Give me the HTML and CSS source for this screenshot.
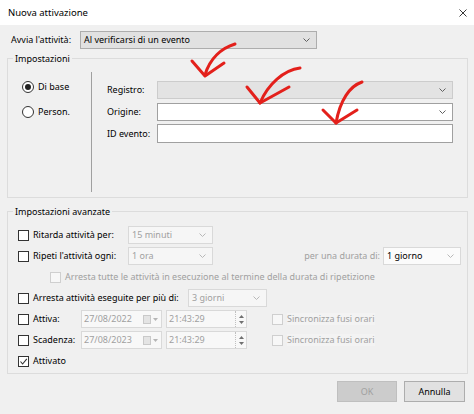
FILE: index.html
```html
<!DOCTYPE html>
<html lang="it">
<head>
<meta charset="utf-8">
<title>Nuova attivazione</title>
<link rel="stylesheet" href="styles.css">
</head>
<body>
<div class="window">
  <div class="titlebar">
    <span class="title">Nuova attivazione</span>
    <svg class="close" viewBox="0 0 8 8" width="8" height="8"><path d="M0.5 0.5 L7.5 7.5 M7.5 0.5 L0.5 7.5" stroke="#222" stroke-width="0.9" fill="none"/></svg>
  </div>
  <div class="main">
    <div class="start-row">
      <span class="start-label">Avvia l'attività:</span>
      <div class="combo combo-start"><span>Al verificarsi di un evento</span><svg class="chev" viewBox="0 0 7 4"><path d="M0.5 0.5 L3.5 3.5 L6.5 0.5"/></svg></div>
    </div>

    <fieldset class="group group-basic">
      <legend>Impostazioni</legend>
      <div class="basic-layout">
        <div class="radios">
          <div class="radio-row"><span class="radio checked"></span><span>Di base</span></div>
          <div class="radio-row"><span class="radio"></span><span>Person.</span></div>
        </div>
        <div class="vdivider"></div>
        <div class="fields">
          <span>Registro:</span>
          <div class="combo combo-locked"><span></span><svg class="chev" viewBox="0 0 7 4"><path d="M0.5 0.5 L3.5 3.5 L6.5 0.5"/></svg></div>
          <span>Origine:</span>
          <div class="combo combo-white"><span></span><svg class="chev" viewBox="0 0 7 4"><path d="M0.5 0.5 L3.5 3.5 L6.5 0.5"/></svg></div>
          <span>ID evento:</span>
          <div class="textbox"></div>
        </div>
      </div>
    </fieldset>

    <fieldset class="group group-adv">
      <legend>Impostazioni avanzate</legend>
      <div class="adv-rows">
        <div class="row">
          <label class="chk-wrap w-110"><span class="chk"></span>Ritarda attività per:</label>
          <div class="combo combo-dis w-85"><span>15 minuti</span><svg class="chev" viewBox="0 0 7 4"><path d="M0.5 0.5 L3.5 3.5 L6.5 0.5"/></svg></div>
        </div>
        <div class="row">
          <label class="chk-wrap w-110"><span class="chk"></span>Ripeti l'attività ogni:</label>
          <div class="combo combo-dis w-85"><span>1 ora</span><svg class="chev" viewBox="0 0 7 4"><path d="M0.5 0.5 L3.5 3.5 L6.5 0.5"/></svg></div>
          <span class="spacer"></span>
          <span class="muted duration-label">per una durata di:</span>
          <div class="combo combo-dis combo-dark w-78"><span>1 giorno</span><svg class="chev" viewBox="0 0 7 4"><path d="M0.5 0.5 L3.5 3.5 L6.5 0.5"/></svg></div>
        </div>
        <div class="row indent">
          <span class="chk chk-dis"></span><span class="muted">Arresta tutte le attività in esecuzione al termine della durata di ripetizione</span>
        </div>
        <div class="row">
          <label class="chk-wrap w-170"><span class="chk"></span>Arresta attività eseguite per più di:</label>
          <div class="combo combo-dis w-79"><span>3 giorni</span><svg class="chev" viewBox="0 0 7 4"><path d="M0.5 0.5 L3.5 3.5 L6.5 0.5"/></svg></div>
        </div>
        <div class="row">
          <label class="chk-wrap w-63"><span class="chk"></span>Attiva:</label>
          <div class="datebox"><span>27/08/2022</span><span class="cal"></span><svg class="tri" viewBox="0 0 5 3"><path d="M0 0 H5 L2.5 3 Z"/></svg></div>
          <div class="timebox"><span>21:43:29</span><span class="spin"><svg viewBox="0 0 5 3"><path d="M0 3 H5 L2.5 0 Z"/></svg><svg viewBox="0 0 5 3"><path d="M0 0 H5 L2.5 3 Z"/></svg></span></div>
          <span class="chk chk-dis sync-chk"></span><span class="muted sync-text">Sincronizza fusi orari</span>
        </div>
        <div class="row">
          <label class="chk-wrap w-63"><span class="chk"></span>Scadenza:</label>
          <div class="datebox"><span>27/08/2023</span><span class="cal"></span><svg class="tri" viewBox="0 0 5 3"><path d="M0 0 H5 L2.5 3 Z"/></svg></div>
          <div class="timebox"><span>21:43:29</span><span class="spin"><svg viewBox="0 0 5 3"><path d="M0 3 H5 L2.5 0 Z"/></svg><svg viewBox="0 0 5 3"><path d="M0 0 H5 L2.5 3 Z"/></svg></span></div>
          <span class="chk chk-dis sync-chk"></span><span class="muted sync-text">Sincronizza fusi orari</span>
        </div>
        <div class="row">
          <label class="chk-wrap"><span class="chk"><svg viewBox="0 0 9 9"><path d="M1.5 4.5 L3.6 7 L7.8 1.8"/></svg></span>Attivato</label>
        </div>
      </div>
    </fieldset>

    <div class="buttons">
      <div class="btn btn-ok">OK</div>
      <div class="btn btn-cancel">Annulla</div>
    </div>
  </div>

  <svg class="annotations" viewBox="0 0 474 414" width="474" height="414">
    <g fill="none" stroke="#e3201b" stroke-width="3" stroke-linecap="round" stroke-linejoin="round">
      <path d="M235 44 C222 48 210 58 205 75"/>
      <path d="M192 61 L205 76 L224 63"/>
      <path d="M300 68 C284 70 268 84 260 103"/>
      <path d="M247 87 L260 103 L289 87"/>
      <path d="M362 82 C350 86 340 100 336 123"/>
      <path d="M323 110 L336 123 L357 110"/>
    </g>
  </svg>
</div>
</body>
</html>
```

FILE: styles.css
```css
* { box-sizing: border-box; }
html, body { margin: 0; padding: 0; }
body {
  width: 474px;
  height: 414px;
  overflow: hidden;
  background: #f0f0f0;
  font-family: "Noto Sans", "DejaVu Sans", sans-serif;
  font-size: 9px;
  line-height: 12px;
  color: #000;
}
.window { position: relative; width: 474px; height: 414px; }

.titlebar {
  height: 25px;
  background: #fff;
  display: flex;
  align-items: center;
  justify-content: space-between;
  padding: 0 7px 0 8px;
}
.title { font-size: 9.5px; }
.close { width: 8px; height: 8px; }

.main { padding: 6px 6px 0 7px; }

.start-row { display: flex; align-items: center; height: 18px; }
.start-label { width: 73px; padding-left: 4px; }

.combo {
  display: flex;
  align-items: center;
  justify-content: space-between;
  height: 18px;
  padding: 0 6px 0 3px;
  border: 1px solid #adadad;
  background: #e1e1e1;
  white-space: nowrap;
}
.combo-start { width: 237px; }
.chev { width: 7px; height: 4px; flex: none; fill: none; stroke: #606060; stroke-width: 1; }

.group { margin: 0; padding: 0; border: 1px solid #dcdcdc; min-width: 0; }
.group legend { margin-left: 5px; padding: 0 2px; line-height: 15px; }

.group-basic { margin-top: 2px; }
.basic-layout { display: flex; padding: 6px 0 5px; }
.radios { width: 83px; padding: 8px 0 0 14px; display: flex; flex-direction: column; gap: 11px; }
.radio-row { display: flex; align-items: center; gap: 4px; height: 14px; }
.radio {
  width: 12px; height: 12px;
  border: 1px solid #333;
  border-radius: 50%;
  background: #fff;
  display: flex; align-items: center; justify-content: center;
}
.radio.checked::after { content: ""; width: 6px; height: 6px; border-radius: 50%; background: #222; }
.vdivider { width: 1px; height: 120px; background: #a0a0a0; }

.fields {
  display: grid;
  grid-template-columns: 50px 296px;
  grid-auto-rows: 19px;
  row-gap: 3px;
  padding: 8px 0 0 15px;
  align-items: center;
  align-content: start;
}
.combo-locked { background: #e3e3e3; border-color: #cccccc; }
.combo-white { background: #fff; border-color: #a0a0a0; }
.textbox { height: 19px; background: #fff; border: 1px solid #a0a0a0; }

.group-adv { margin-top: 6px; }
.adv-rows { display: flex; flex-direction: column; gap: 3px; padding: 7px 6px 3px 10px; }
.row { display: flex; align-items: center; height: 18px; }
.row.indent { padding-left: 32px; }

.chk-wrap { display: flex; align-items: center; white-space: nowrap; flex: none; }
.w-110 { width: 110px; }
.w-170 { width: 170px; }
.w-63 { width: 63px; }
.w-85 { width: 85px; }
.w-78 { width: 78px; }
.w-79 { width: 79px; }

.chk {
  width: 11px; height: 11px;
  border: 1px solid #333;
  background: #fff;
  flex: none;
  margin-right: 4px;
  display: flex; align-items: center; justify-content: center;
}
.chk svg { width: 9px; height: 9px; fill: none; stroke: #333; stroke-width: 1.1; }
.chk-dis { border-color: #cfcfcf; background: #f7f7f7; }
.muted { color: #a0a0a0; white-space: nowrap; }

.combo-dis { background: #f6f6f6; border-color: #d9d9d9; color: #a0a0a0; }
.combo-dis .chev { stroke: #b8b8b8; }
.combo-dark { color: #000; background: #fbfbfb; }
.spacer { flex: 1; }
.duration-label { margin-right: 3px; }

.datebox, .timebox {
  display: flex;
  align-items: center;
  width: 81px;
  height: 18px;
  border: 1px solid #d9d9d9;
  background: #f8f8f8;
  color: #a0a0a0;
  padding-left: 2px;
}
.datebox span:first-child, .timebox span:first-child { flex: 1; }
.cal { width: 8px; height: 9px; background: #e4e4e4; border: 1px solid #c9c9c9; }
.tri { width: 5px; height: 3px; margin: 0 3px 0 2px; fill: #b5b5b5; }
.timebox { margin-left: 4px; }
.spin {
  display: flex; flex-direction: column; align-items: center; justify-content: center; gap: 3px;
  width: 11px; height: 16px;
  border-left: 1px dotted #c0c0c0;
}
.spin svg { width: 5px; height: 3px; fill: #707070; }
.sync-chk { margin-left: 25px; }
.sync-text { background: #f3f3f3; }

.buttons { display: flex; justify-content: flex-end; gap: 7px; margin-top: 7px; padding-right: 3px; }
.btn {
  height: 21px;
  display: flex; align-items: center; justify-content: center;
  border: 1px solid #adadad;
  background: #e1e1e1;
}
.btn-ok { width: 60px; background: #cccccc; border-color: #bfbfbf; color: #a0a0a0; }
.btn-cancel { width: 61px; }

.annotations { position: absolute; left: 0; top: 0; pointer-events: none; }
```
